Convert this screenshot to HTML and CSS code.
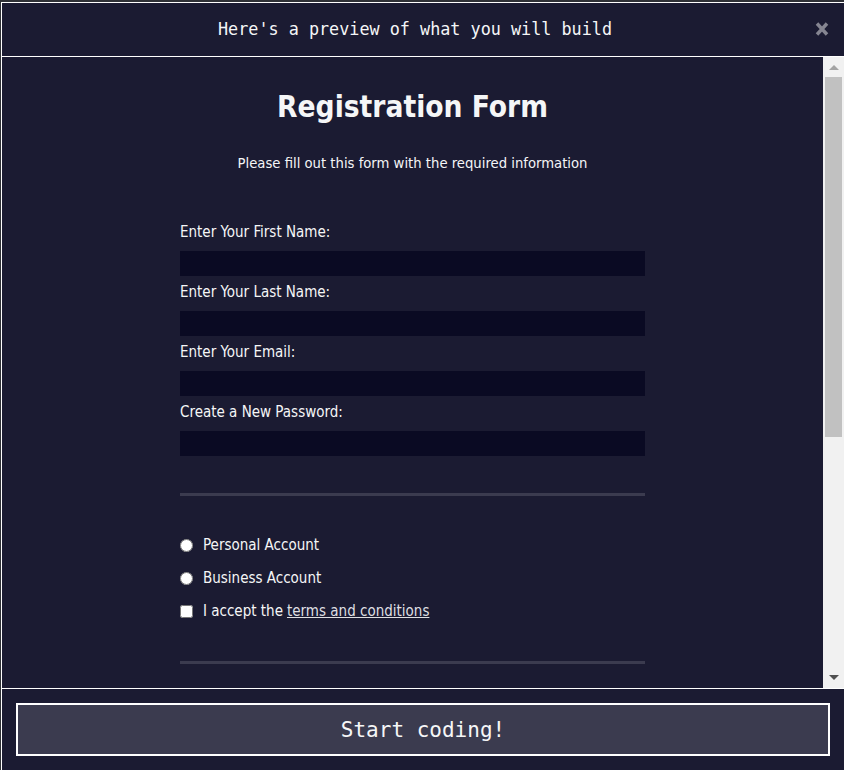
FILE: index.html
```html
<!DOCTYPE html>
<html lang="en">
<head>
<meta charset="utf-8">
<title>Preview</title>
<link rel="stylesheet" href="styles.css">
</head>
<body>
<div class="modal">
  <header class="modal-header">
    <h2 class="modal-title">Here's a preview of what you will build</h2>
    <button class="close" aria-label="Close">
      <svg width="14" height="14" viewBox="0 0 14 14"><path d="M2 1.5 L12 12.5 M12 1.5 L2 12.5" stroke="#858591" stroke-width="3.4" stroke-linecap="butt"/></svg>
    </button>
  </header>
  <div class="modal-body">
    <div class="preview">
      <h1 class="title">Registration Form</h1>
      <p class="subtitle">Please fill out this form with the required information</p>
      <form class="form">
        <fieldset class="group">
          <label class="field"><span class="label-text">Enter Your First Name:</span><input class="text-input" type="text"></label>
          <label class="field"><span class="label-text">Enter Your Last Name:</span><input class="text-input" type="text"></label>
          <label class="field"><span class="label-text">Enter Your Email:</span><input class="text-input" type="email"></label>
          <label class="field"><span class="label-text">Create a New Password:</span><input class="text-input" type="password"></label>
        </fieldset>
        <fieldset class="group group-choices">
          <label class="choice"><input class="inline" type="radio" name="acct">Personal Account</label>
          <label class="choice"><input class="inline" type="radio" name="acct">Business Account</label>
          <label class="choice"><input class="inline" type="checkbox">I accept the <a class="link" href="#">terms and conditions</a></label>
        </fieldset>
      </form>
    </div>
    <div class="scrollbar">
      <div class="arrow arrow-up"></div>
      <div class="track"><div class="thumb"></div></div>
      <div class="arrow arrow-down"></div>
    </div>
  </div>
  <footer class="modal-footer">
    <button class="start-btn">Start coding!</button>
  </footer>
</div>
</body>
</html>
```
FILE: styles.css
```css
html, body {
  margin: 0;
  padding: 0;
  height: 100%;
}
body {
  background: #2f3136;
  overflow: hidden;
}
.modal {
  margin: 2px 0 0 1px;
  height: 768px;
  display: flex;
  flex-direction: column;
  background: #1b1b32;
  border-top: 1px solid #ffffff;
  border-left: 1px solid #ffffff;
  box-sizing: border-box;
}
.modal-header {
  height: 53px;
  flex: none;
  display: flex;
  align-items: center;
  justify-content: center;
  position: relative;
  border-bottom: 1px solid #ffffff;
}
.modal-title {
  margin: 0 0 0 -16px;
  font-family: "DejaVu Sans Mono", monospace;
  font-size: 16.8px;
  font-weight: normal;
  color: #f5f6f7;
  line-height: 20px;
  padding-bottom: 1px;
}
.close {
  position: absolute;
  right: 15px;
  top: 19px;
  width: 14px;
  height: 14px;
  padding: 0;
  border: none;
  background: none;
  display: flex;
}
.modal-body {
  height: 631px;
  flex: none;
  display: flex;
  border-bottom: 1px solid #ffffff;
  overflow: hidden;
}
.preview {
  flex: 1;
  background: #1b1b32;
  color: #f5f6f7;
  font-family: "DejaVu Sans Condensed", "DejaVu Sans", sans-serif;
  font-size: 15px;
  overflow: hidden;
}
.title {
  margin: 30px 0 0;
  text-align: center;
  font-size: 29.6px;
  font-weight: bold;
  line-height: 40px;
}
.subtitle {
  margin: 26px 0 0;
  text-align: center;
  font-size: 14.7px;
  line-height: 20px;
}
.form {
  width: 465px;
  margin: 0 auto;
  padding-top: 32px;
}
.group {
  border: none;
  margin: 0;
  padding: 0 0 29px;
  border-bottom: 3px solid #3b3b4f;
}
.field {
  display: flex;
  flex-direction: column;
  margin: 8px 0;
}
.field:first-child {
  margin-top: 19px;
}
.label-text {
  line-height: 17px;
}
.text-input {
  margin: 10px 0 0;
  height: 25px;
  box-sizing: border-box;
  width: 100%;
  background: #0a0a23;
  border: 1px solid #0a0a23;
  color: #ffffff;
  padding: 0;
}
.group-choices {
  padding: 29px 0 29px;
}
.choice {
  display: flex;
  align-items: center;
  height: 25px;
  margin: 8px 0;
  line-height: 17px;
}
.choice .inline {
  margin: 0 10px 0 0;
  width: 13px;
  height: 13px;
  flex: none;
}
.link {
  color: #dfdfe2;
  text-decoration: underline;
  margin-left: 4px;
}
.scrollbar {
  width: 21px;
  flex: none;
  background: #f1f1f1;
  display: flex;
  flex-direction: column;
  align-items: center;
}
.arrow {
  width: 0;
  height: 0;
  border-left: 5px solid transparent;
  border-right: 5px solid transparent;
  flex: none;
}
.arrow-up {
  margin-top: 8px;
  border-bottom: 5px solid #a3a3a3;
}
.arrow-down {
  margin-bottom: 8px;
  border-top: 5px solid #505050;
}
.track {
  flex: 1;
  width: 100%;
  display: flex;
  justify-content: center;
  padding-top: 7px;
}
.thumb {
  width: 17px;
  height: 360px;
  background: #c1c1c1;
}
.modal-footer {
  flex: 1;
  padding: 14px 14px 14px 14px;
  box-sizing: border-box;
  display: flex;
}
.start-btn {
  flex: 1;
  height: 53px;
  background: #3b3b4f;
  border: 2px solid #ffffff;
  color: #f5f6f7;
  font-family: "DejaVu Sans Mono", monospace;
  font-size: 21px;
  padding: 0;
  cursor: pointer;
}
```
